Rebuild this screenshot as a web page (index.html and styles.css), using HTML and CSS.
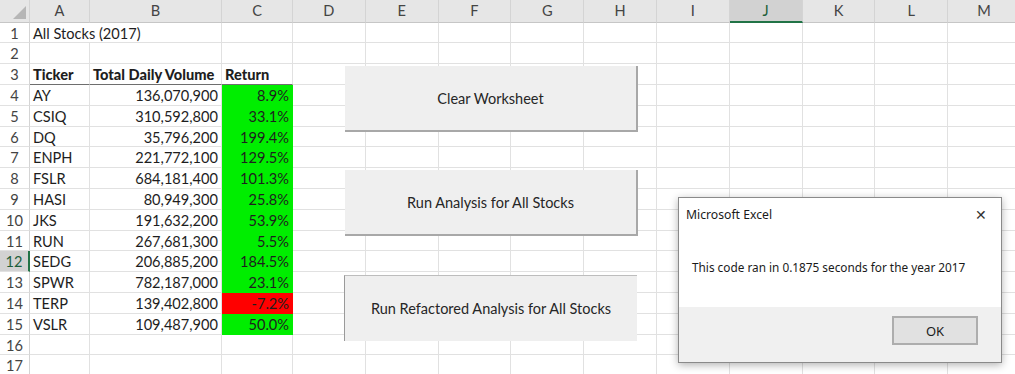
FILE: index.html
```html
<!DOCTYPE html>
<html lang="en">
<head>
  <meta charset="UTF-8" />
  <meta name="viewport" content="width=device-width, initial-scale=1.0"/>
  <title>All Stocks (2017)</title>
  <link rel="stylesheet" href="styles.css">
</head>
<body>

  <div class="page">
    <!-- planilha montada pelo script abaixo -->
    <div class="sheet" id="sheet"></div>

    <!-- botões de macro -->
    <button class="macro macro-clear">Clear Worksheet</button>
    <button class="macro macro-run">Run Analysis for All Stocks</button>
    <button class="macro macro-refactor">Run Refactored Analysis for All Stocks</button>

    <!-- caixa de mensagem -->
    <div class="msgbox">
      <div class="msgbox-title">
        <span>Microsoft Excel</span>
        <span class="msgbox-close">&#x2715;</span>
      </div>
      <div class="msgbox-body">This code ran in 0.1875 seconds for the year 2017</div>
      <div class="msgbox-footer">
        <button class="msgbox-ok">OK</button>
      </div>
    </div>
  </div>

  <script>
    const colunas = ["A","B","C","D","E","F","G","H","I","J","K","L","M"];

    const acoes = [
      ["AY",   "136,070,900", "8.9%"],
      ["CSIQ", "310,592,800", "33.1%"],
      ["DQ",   "35,796,200",  "199.4%"],
      ["ENPH", "221,772,100", "129.5%"],
      ["FSLR", "684,181,400", "101.3%"],
      ["HASI", "80,949,300",  "25.8%"],
      ["JKS",  "191,632,200", "53.9%"],
      ["RUN",  "267,681,300", "5.5%"],
      ["SEDG", "206,885,200", "184.5%"],
      ["SPWR", "782,187,000", "23.1%"],
      ["TERP", "139,402,800", "-7.2%"],
      ["VSLR", "109,487,900", "50.0%"]
    ];

    const sheet = document.getElementById("sheet");

    function celula(classe, texto) {
      const div = document.createElement("div");
      div.className = classe;
      if (texto) div.textContent = texto;
      sheet.appendChild(div);
      return div;
    }

    // cabeçalho das colunas
    celula("corner");
    colunas.forEach(c => celula(c === "J" ? "colhead selected" : "colhead", c));

    for (let r = 1; r <= 17; r++) {
      celula(r === 12 ? "rowhead selected" : "rowhead", String(r));

      if (r === 1) {
        celula("cell span2", "All Stocks (2017)");
        colunas.slice(2).forEach(() => celula("cell"));
        continue;
      }

      let linha = ["", "", ""];
      let extra = "";
      if (r === 3) {
        linha = ["Ticker", "Total Daily Volume", "Return"];
        extra = " title";
      } else if (r >= 4 && r <= 15) {
        linha = acoes[r - 4];
      }

      celula("cell" + extra, linha[0]);
      celula("cell num" + extra, linha[1]);
      let classeRet = "cell num" + extra;
      if (r >= 4 && r <= 15) classeRet += linha[2].startsWith("-") ? " neg" : " pos";
      celula(classeRet, linha[2]);
      colunas.slice(3).forEach(() => celula("cell"));
    }
  </script>
</body>
</html>
```

FILE: styles.css
```css
* {
  box-sizing: border-box;
}

body, html {
  margin: 0;
  padding: 0;
  background: #fff;
  overflow: hidden;
}

.page {
  position: relative;
  width: 1015px;
  height: 374px;
  overflow: hidden;
}

.sheet {
  display: grid;
  grid-template-columns: 30px 60px 132px 71px repeat(10, 72.8px);
  grid-template-rows: 22.6px;
  grid-auto-rows: 20.8px;
  font-family: Lato, "Liberation Sans", sans-serif;
  font-size: 14.6px;
  color: #1e1e1e;
}

.corner {
  position: relative;
  background: #e6e6e6;
  border-right: 1px solid #d4d4d4;
  border-bottom: 1px solid #c6c6c6;
}

.corner::after {
  content: "";
  position: absolute;
  right: 3px;
  bottom: 3px;
  border-left: 13px solid transparent;
  border-bottom: 13px solid #b6b6b6;
}

.colhead {
  background: #e6e6e6;
  color: #444;
  text-align: center;
  line-height: 22px;
  border-right: 1px solid #d4d4d4;
  border-bottom: 1px solid #c6c6c6;
}

.colhead.selected {
  background: #d2d2d2;
  color: #1d5e3a;
  border-bottom: 2px solid #217346;
}

.rowhead {
  color: #444;
  text-align: center;
  line-height: 21px;
  border-right: 1px solid #d4d4d4;
  border-bottom: 1px solid #e1e1e1;
}

.rowhead.selected {
  background: #d2d2d2;
  color: #1d5e3a;
  border-right: 2px solid #217346;
}

.cell {
  padding: 1px 3px 0;
  line-height: 20px;
  white-space: nowrap;
  overflow: hidden;
  border-right: 1px solid #e1e1e1;
  border-bottom: 1px solid #e1e1e1;
}

.span2 {
  grid-column: span 2;
}

.num {
  text-align: right;
}

.title {
  font-weight: 900;
  text-align: left;
  border-bottom: 1px solid #6e6e6e;
}

.pos {
  background: #00ee00;
  border-color: #00ee00;
}

.neg {
  background: #ff0000;
  border-color: #ff0000;
}

/* botões de macro */
.macro {
  position: absolute;
  left: 345px;
  width: 293px;
  height: 66px;
  padding: 0;
  background: #efefef;
  border: none;
  font-family: Lato, "Liberation Sans", sans-serif;
  font-size: 14.5px;
  color: #262626;
}

.macro-clear {
  top: 66px;
  border-right: 2px solid #a8a8a8;
  border-bottom: 2px solid #a8a8a8;
}

.macro-run {
  top: 170px;
  border-right: 2px solid #a8a8a8;
  border-bottom: 2px solid #a8a8a8;
}

.macro-refactor {
  top: 275px;
  left: 344px;
  border-left: 1px solid #9a9a9a;
  border-top: 1px solid #bdbdbd;
}

/* caixa de mensagem */
.msgbox {
  position: absolute;
  left: 678px;
  top: 197px;
  width: 324px;
  height: 166px;
  display: flex;
  flex-direction: column;
  background: #fff;
  border: 1px solid #8a8a8a;
  box-shadow: 0 2px 8px rgba(0,0,0,0.3);
  font-family: "Noto Sans", "Open Sans", sans-serif;
  font-size: 11.8px;
  color: #1a1a1a;
}

.msgbox-title {
  display: flex;
  justify-content: space-between;
  align-items: center;
  height: 32px;
  padding: 0 14px 0 7px;
  font-size: 12.2px;
}

.msgbox-close {
  font-size: 14px;
  font-weight: 300;
  color: #333;
}

.msgbox-body {
  flex: 1;
  padding: 29px 0 0 13px;
}

.msgbox-footer {
  display: flex;
  justify-content: flex-end;
  height: 55px;
  padding: 9px 23px 0 0;
  background: #f0f0f0;
}

.msgbox-ok {
  width: 86px;
  height: 29px;
  background: #e1e1e1;
  border: 2px solid #adadad;
  font-family: "Noto Sans", "Open Sans", sans-serif;
  font-size: 13px;
  color: #1a1a1a;
}
```
